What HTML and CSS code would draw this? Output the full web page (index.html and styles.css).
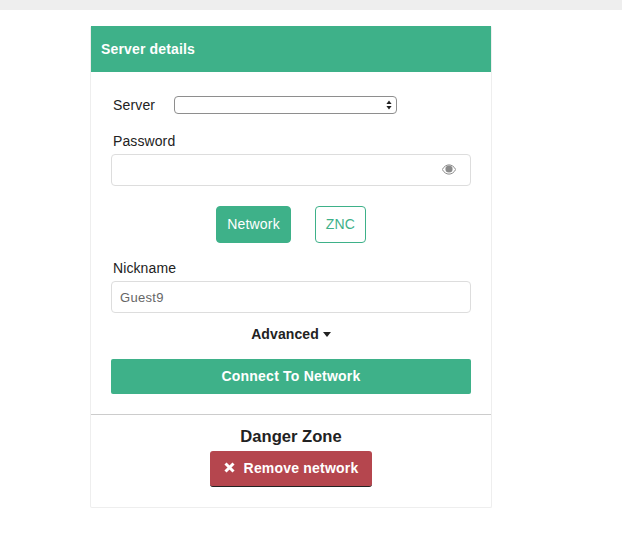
FILE: index.html
```html
<!DOCTYPE html>
<html lang="en">
<head>
  <meta charset="UTF-8">
  <title>Server details</title>
  <link rel="stylesheet" href="styles.css">
</head>
<body>
  <div class="topbar"></div>

  <div class="card">
    <div class="card-head">Server details</div>

    <form class="card-body">
      <div class="server-row">
        <label class="server-label" for="server">Server</label>
        <div class="fake-select" id="server">
          <svg class="updown" width="6" height="10" viewBox="0 0 6 10"><path d="M3 .5L5.6 4H.4zM3 9.5L.4 6h5.2z" fill="#222"/></svg>
        </div>
      </div>

      <label class="field-label" for="password">Password</label>
      <div class="input-wrap">
        <input class="text-input" type="password" id="password">
        <svg class="eye" width="14" height="11" viewBox="0 0 14 11">
          <path d="M.3 5.5C2 2.4 4.4.9 7 .9s5 1.5 6.7 4.6C12 8.6 9.6 10.1 7 10.1S2 8.6.3 5.5z" fill="none" stroke="#8a8a8a" stroke-width="1"/>
          <circle cx="7" cy="5" r="3.6" fill="#8a8a8a"/>
        </svg>
      </div>

      <div class="tabs">
        <button type="button" class="tab tab-active">Network</button>
        <button type="button" class="tab">ZNC</button>
      </div>

      <label class="field-label nick-label" for="nick">Nickname</label>
      <input class="text-input" type="text" id="nick" value="Guest9">

      <div class="advanced">Advanced <span class="caret"></span></div>

      <button type="button" class="connect">Connect To Network</button>
    </form>

    <div class="danger">
      <h3>Danger Zone</h3>
      <button type="button" class="remove">
        <svg width="11" height="11" viewBox="0 0 11 11"><path d="M1.5 1.5l8 8M9.5 1.5l-8 8" stroke="#fff" stroke-width="3"/></svg>
        Remove network
      </button>
    </div>
  </div>
</body>
</html>
```

FILE: styles.css
```css
body { margin: 0; background: #fff; font-family: "Liberation Sans", Arial, sans-serif; font-size: 14px; color: #222; }
.topbar { height: 10px; background: #eee; }

.card { width: 400px; margin: 16px 0 0 90px; border: 1px solid #eee; border-top: 0; border-radius: 2px; }
.card-head { height: 46px; line-height: 46px; padding-left: 10px; background: #3eb189; color: #fff; font-weight: bold; letter-spacing: .15px; }
.card-body { padding: 24px 20px 20px; display: flex; flex-direction: column; }

.server-row { display: flex; align-items: center; height: 18px; padding-left: 2px; }
.server-label { width: 61px; letter-spacing: .15px; }
.fake-select { width: 217px; height: 16px; border: 1px solid #8e8e8e; border-radius: 4px; display: flex; align-items: center; justify-content: flex-end; padding-right: 4px; }

.field-label { margin-left: 2px; line-height: 16px; margin-top: 19px; margin-bottom: 5px; letter-spacing: .1px; }
.input-wrap { position: relative; }
.text-input { display: block; box-sizing: border-box; width: 100%; height: 32px; border: 1px solid #ddd; border-radius: 4px; padding: 0 8px; font-family: "Liberation Sans", Arial, sans-serif; font-size: 13px; letter-spacing: .3px; color: #666; outline: none; }
.eye { position: absolute; right: 15px; top: 10px; }

.tabs { display: flex; justify-content: center; gap: 24px; margin-top: 20px; }
.tab { height: 37px; width: 51px; padding: 0 0 2px; border: 1px solid #3eb189; border-radius: 4px; background: #fff; color: #3eb189; font: 14px "Liberation Sans", Arial, sans-serif; letter-spacing: .2px; }
.tab-active { width: 75px; background: #3eb189; color: #fff; }

.nick-label { margin-top: 17px; }

.advanced { margin-top: 13px; height: 16px; line-height: 16px; text-align: center; font-weight: bold; letter-spacing: .1px; }
.caret { display: inline-block; width: 0; height: 0; border: 4.5px solid transparent; border-top: 5px solid #222; border-bottom: 0; vertical-align: 2px; }

.connect { margin-top: 17px; height: 35px; padding: 0 0 2px; border: 0; border-radius: 2px; background: #3eb189; color: #fff; font: bold 14px "Liberation Sans", Arial, sans-serif; letter-spacing: .22px; }

.danger { border-top: 1px solid #ccc; padding: 12px 0 20px; text-align: center; }
.danger h3 { margin: 0 0 5px; font-size: 16.6px; line-height: 19px; }
.remove { display: inline-flex; align-items: center; justify-content: center; gap: 9px; width: 162px; height: 36px; padding: 0 0 2px; border: 0; border-bottom: 1px solid #222; border-radius: 3px; background: #b5464e; color: #fff; font: bold 14px "Liberation Sans", Arial, sans-serif; letter-spacing: .2px; }
```
